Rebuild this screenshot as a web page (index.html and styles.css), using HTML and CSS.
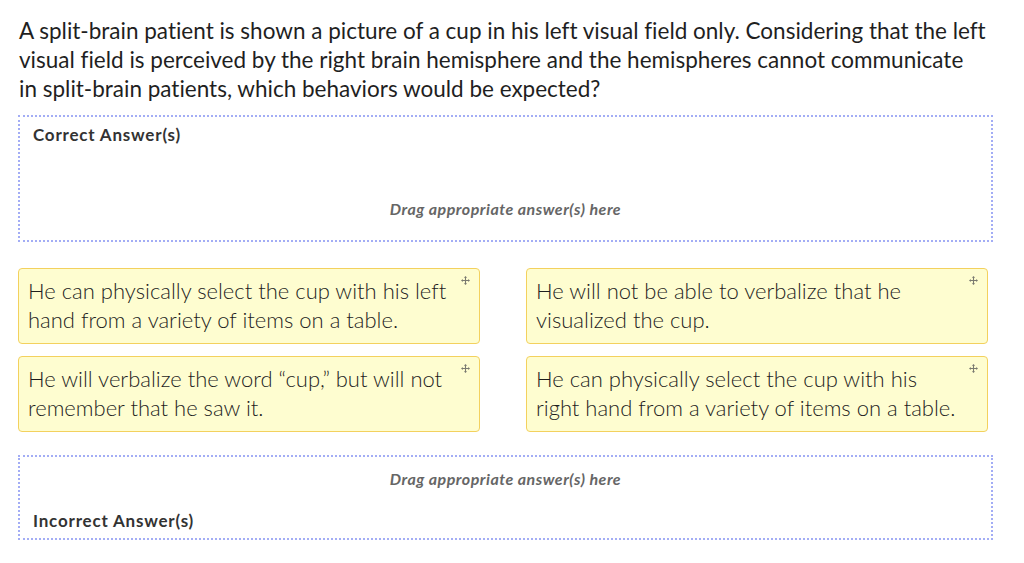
FILE: index.html
```html
<!DOCTYPE html>
<html>
<head>
<meta charset="utf-8">
<link rel="stylesheet" href="styles.css">
</head>
<body>
<div class="page">
  <p class="question">A split-brain patient is shown a picture of a cup in his left visual field only. Considering that the left visual field is perceived by the right brain hemisphere and the hemispheres cannot communicate <span class="nowrap">in split-brain</span> patients, which behaviors would be expected?</p>

  <div class="drop drop-correct">
    <div class="drop-label">Correct Answer(s)</div>
    <div class="drop-hint">Drag appropriate answer(s) here</div>
  </div>

  <div class="cards">
    <div class="card">
      <span class="card-text">He can physically select the cup with his left hand from a variety of items on a table.</span>
      <svg class="move" viewBox="0 0 10 10"><path d="M5 0L3.2 2H4.4V4.4H2V3.2L0 5L2 6.8V5.6H4.4V8H3.2L5 10L6.8 8H5.6V5.6H8V6.8L10 5L8 3.2V4.4H5.6V2H6.8Z"/></svg>
    </div>
    <div class="card">
      <span class="card-text">He will not be able to verbalize that he visualized the cup.</span>
      <svg class="move" viewBox="0 0 10 10"><path d="M5 0L3.2 2H4.4V4.4H2V3.2L0 5L2 6.8V5.6H4.4V8H3.2L5 10L6.8 8H5.6V5.6H8V6.8L10 5L8 3.2V4.4H5.6V2H6.8Z"/></svg>
    </div>
    <div class="card">
      <span class="card-text">He will verbalize the word “cup,” but will not remember that he saw it.</span>
      <svg class="move" viewBox="0 0 10 10"><path d="M5 0L3.2 2H4.4V4.4H2V3.2L0 5L2 6.8V5.6H4.4V8H3.2L5 10L6.8 8H5.6V5.6H8V6.8L10 5L8 3.2V4.4H5.6V2H6.8Z"/></svg>
    </div>
    <div class="card">
      <span class="card-text">He can physically select the cup with his right hand from a variety of items on a table.</span>
      <svg class="move" viewBox="0 0 10 10"><path d="M5 0L3.2 2H4.4V4.4H2V3.2L0 5L2 6.8V5.6H4.4V8H3.2L5 10L6.8 8H5.6V5.6H8V6.8L10 5L8 3.2V4.4H5.6V2H6.8Z"/></svg>
    </div>
  </div>

  <div class="drop drop-incorrect">
    <div class="drop-hint">Drag appropriate answer(s) here</div>
    <div class="drop-label">Incorrect Answer(s)</div>
  </div>
</div>
</body>
</html>
```

FILE: styles.css
```css
html, body {
  margin: 0;
  padding: 0;
  background: #ffffff;
}

.page {
  padding: 16px 31px 0 18px;
  font-family: "Lato", "Noto Sans", sans-serif;
  color: #222222;
  font-variant-ligatures: none;
}

.question {
  margin: 0 0 0 1px;
  max-width: 972px;
  font-size: 22.5px;
  line-height: 29px;
  color: #1f1f1f;
}

.nowrap {
  white-space: nowrap;
}

.drop {
  box-sizing: border-box;
  border: 2px dotted #a3adf5;
  display: flex;
  flex-direction: column;
  padding: 0 13px;
}

.drop-correct {
  margin-top: 12px;
  height: 127px;
  padding-top: 7px;
}

.drop-incorrect {
  margin-top: 23px;
  height: 85px;
  padding-top: 12px;
}

.drop-label {
  font-size: 17px;
  font-weight: 700;
  letter-spacing: 0.8px;
  color: #333333;
  line-height: 22px;
}

.drop-hint {
  font-size: 16px;
  font-weight: 700;
  font-style: italic;
  letter-spacing: 0.5px;
  color: #666666;
  text-align: center;
  line-height: 20px;
}

.drop-correct .drop-hint {
  margin-top: 53px;
}

.drop-incorrect .drop-hint {
  margin-bottom: 21px;
}

.cards {
  display: grid;
  grid-template-columns: 462px 462px;
  column-gap: 46px;
  row-gap: 12px;
  margin-top: 26px;
}

.card {
  position: relative;
  box-sizing: border-box;
  height: 76px;
  background: #fefdd0;
  border: 1px solid #f3d15e;
  border-radius: 4px;
  padding: 7px 27px 0 9px;
}

.card-text {
  display: block;
  font-size: 22px;
  font-weight: 300;
  line-height: 29px;
  color: #1e1e1e;
}

.move {
  position: absolute;
  top: 7px;
  right: 9px;
  width: 9px;
  height: 9px;
  fill: #7a7a70;
}
```
